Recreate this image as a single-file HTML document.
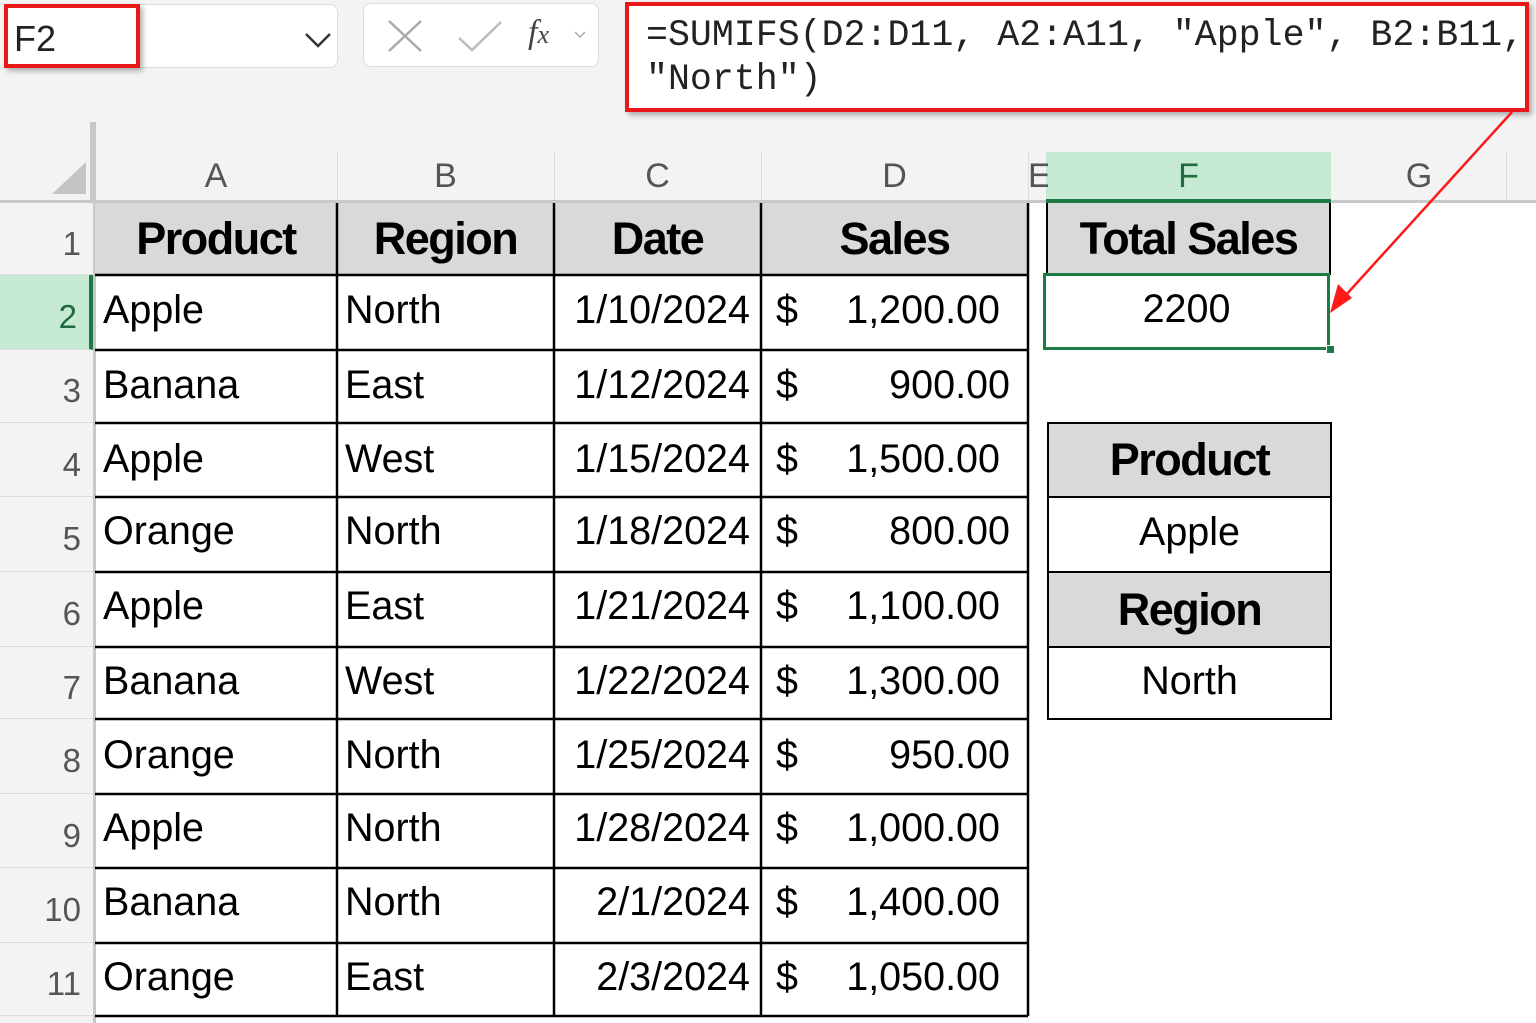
<!DOCTYPE html>
<html><head><meta charset="utf-8"><style>
*{margin:0;padding:0;box-sizing:border-box}
body{width:1536px;height:1023px;position:relative;overflow:hidden;background:#fff;font-family:"Liberation Sans",Arial,sans-serif;color:#000}
.a{position:absolute}
.c{position:absolute;display:flex;align-items:center;font-size:39.5px;white-space:nowrap}
.h{font-weight:bold;font-size:45px;letter-spacing:-1.5px;justify-content:center;background:#d9d9d9}
.cl{position:absolute;top:150px;height:53px;display:flex;align-items:center;justify-content:center;font-size:34px;color:#555}
.rn{position:absolute;left:0;width:93px;display:flex;align-items:center;justify-content:flex-end;padding-right:12px;padding-top:10px;font-size:33px;color:#555;border-bottom:1px solid #ddd}
</style></head><body>
<div class="a" style="left:0;top:0;width:1536px;height:203px;background:#f3f3f3"></div>
<div class="a" style="left:0;top:203px;width:95px;height:820px;background:#f3f3f3"></div>
<!-- name box -->
<div class="a" style="left:4px;top:4px;width:334px;height:64px;background:#fff;border:1px solid #ddd;border-radius:8px"></div>
<svg class="a" style="left:303px;top:30px" width="30" height="20"><path d="M3 4 L15 16 L27 4" fill="none" stroke="#333" stroke-width="2.5"/></svg>
<div class="a" style="left:4px;top:4px;width:136px;height:64px;border:4px solid #e81818;box-shadow:3px 3px 5px rgba(0,0,0,.3)"></div>
<div class="a" style="left:14px;top:18px;font-size:36px;color:#222">F2</div>
<!-- fx box -->
<div class="a" style="left:363px;top:3px;width:236px;height:64px;background:#fff;border:1px solid #ddd;border-radius:8px"></div>
<svg class="a" style="left:385px;top:18px" width="40" height="36"><path d="M4 3 L36 33 M36 3 L4 33" stroke="#aaa" stroke-width="2.5"/></svg>
<svg class="a" style="left:455px;top:18px" width="50" height="36"><path d="M4 20 L17 32 L46 4" fill="none" stroke="#bbb" stroke-width="2.5"/></svg>
<div class="a" style="left:528px;top:14px;font-size:34px;font-style:italic;font-family:'Liberation Serif',serif;color:#444">f<span style="font-size:26px">x</span></div>
<svg class="a" style="left:573px;top:30px" width="14" height="10"><path d="M2 2 L7 7 L12 2" fill="none" stroke="#aaa" stroke-width="1.5"/></svg>
<!-- formula -->
<div class="a" style="left:625px;top:2px;width:904px;height:110px;background:#fff;border:4px solid #e81818;box-shadow:3px 3px 5px rgba(0,0,0,.3)"></div>
<div class="a" style="left:646px;top:14px;font-family:'Liberation Mono',monospace;font-size:36.6px;line-height:44px;color:#222;white-space:pre">=SUMIFS(D2:D11, A2:A11, "Apple", B2:B11,
"North")</div>
<!-- corner -->
<div class="a" style="left:90px;top:122px;width:6px;height:81px;background:#c8c8c8"></div>
<svg class="a" style="left:50px;top:160px" width="38" height="36"><path d="M36 2 L36 34 L2 34 Z" fill="#c4c4c4"/></svg>
<div class="a" style="left:0;top:200px;width:1536px;height:3px;background:#c8c8c8"></div>
<!-- column headers -->
<div class="a" style="left:1046px;top:152px;width:285px;height:48px;background:#c6e9d3"></div>
<div class="a" style="left:1046px;top:199px;width:285px;height:4px;background:#1e7a45"></div>
<div class="cl" style="left:95px;width:242px">A</div>
<div class="cl" style="left:337px;width:217px">B</div>
<div class="cl" style="left:554px;width:207px">C</div>
<div class="cl" style="left:761px;width:267px">D</div>
<div class="cl" style="left:1028px;width:20px;overflow:hidden;justify-content:flex-start">E</div>
<div class="cl" style="left:1046px;width:285px;color:#1e6b3c">F</div>
<div class="cl" style="left:1331px;width:176px">G</div>
<div class="a" style="left:337px;top:152px;width:1px;height:48px;background:#ddd"></div>
<div class="a" style="left:554px;top:152px;width:1px;height:48px;background:#ddd"></div>
<div class="a" style="left:761px;top:152px;width:1px;height:48px;background:#ddd"></div>
<div class="a" style="left:1028px;top:152px;width:1px;height:48px;background:#ddd"></div>
<div class="a" style="left:1506px;top:152px;width:1px;height:48px;background:#ddd"></div>
<!-- row numbers -->
<div class="rn" style="top:203px;height:72px">1</div>
<div class="rn" style="top:275px;height:75px;background:#c6e9d3;color:#1e6b3c;border-right:4px solid #1e7a45">2</div>
<div class="rn" style="top:350px;height:73px">3</div>
<div class="rn" style="top:423px;height:74px">4</div>
<div class="rn" style="top:497px;height:75px">5</div>
<div class="rn" style="top:572px;height:75px">6</div>
<div class="rn" style="top:647px;height:72px">7</div>
<div class="rn" style="top:719px;height:75px">8</div>
<div class="rn" style="top:794px;height:74px">9</div>
<div class="rn" style="top:868px;height:75px">10</div>
<div class="rn" style="top:943px;height:73px">11</div>
<div class="a" style="left:93px;top:203px;width:3px;height:820px;background:#c8c8c8"></div>
<!-- main table -->
<svg class="a" style="left:0;top:0" width="1536" height="1023">
<rect x="95" y="203" width="933" height="72" fill="#d9d9d9"/>
<g stroke="#000" stroke-width="2.5">
<path d="M95 275H1028M95 350H1028M95 423H1028M95 497H1028M95 572H1028M95 647H1028M95 719H1028M95 794H1028M95 868H1028M95 943H1028M95 1016H1028"/>
<path d="M337 203V1016M554 203V1016M761 203V1016M1028 203V1016"/>
</g>
</svg>
<div class="c h" style="left:95px;top:203px;width:242px;height:72px;background:none">Product</div>
<div class="c h" style="left:337px;top:203px;width:217px;height:72px;background:none">Region</div>
<div class="c h" style="left:554px;top:203px;width:207px;height:72px;background:none">Date</div>
<div class="c h" style="left:761px;top:203px;width:267px;height:72px;background:none">Sales</div>

<div class="c" style="left:103px;top:275px;height:70px">Apple</div>
<div class="c" style="left:103px;top:350px;height:70px">Banana</div>
<div class="c" style="left:103px;top:423px;height:72px">Apple</div>
<div class="c" style="left:103px;top:497px;height:68px">Orange</div>
<div class="c" style="left:103px;top:572px;height:68px">Apple</div>
<div class="c" style="left:103px;top:647px;height:68px">Banana</div>
<div class="c" style="left:103px;top:719px;height:72px">Orange</div>
<div class="c" style="left:103px;top:794px;height:68px">Apple</div>
<div class="c" style="left:103px;top:868px;height:68px">Banana</div>
<div class="c" style="left:103px;top:943px;height:68px">Orange</div>

<div class="c" style="left:345px;top:275px;height:70px">North</div>
<div class="c" style="left:345px;top:350px;height:70px">East</div>
<div class="c" style="left:345px;top:423px;height:72px">West</div>
<div class="c" style="left:345px;top:497px;height:68px">North</div>
<div class="c" style="left:345px;top:572px;height:68px">East</div>
<div class="c" style="left:345px;top:647px;height:68px">West</div>
<div class="c" style="left:345px;top:719px;height:72px">North</div>
<div class="c" style="left:345px;top:794px;height:68px">North</div>
<div class="c" style="left:345px;top:868px;height:68px">North</div>
<div class="c" style="left:345px;top:943px;height:68px">East</div>

<div class="c" style="left:554px;width:196px;justify-content:flex-end;top:275px;height:70px">1/10/2024</div>
<div class="c" style="left:554px;width:196px;justify-content:flex-end;top:350px;height:70px">1/12/2024</div>
<div class="c" style="left:554px;width:196px;justify-content:flex-end;top:423px;height:72px">1/15/2024</div>
<div class="c" style="left:554px;width:196px;justify-content:flex-end;top:497px;height:68px">1/18/2024</div>
<div class="c" style="left:554px;width:196px;justify-content:flex-end;top:572px;height:68px">1/21/2024</div>
<div class="c" style="left:554px;width:196px;justify-content:flex-end;top:647px;height:68px">1/22/2024</div>
<div class="c" style="left:554px;width:196px;justify-content:flex-end;top:719px;height:72px">1/25/2024</div>
<div class="c" style="left:554px;width:196px;justify-content:flex-end;top:794px;height:68px">1/28/2024</div>
<div class="c" style="left:554px;width:196px;justify-content:flex-end;top:868px;height:68px">2/1/2024</div>
<div class="c" style="left:554px;width:196px;justify-content:flex-end;top:943px;height:68px">2/3/2024</div>

<div class="c" style="left:776px;top:275px;height:70px">$</div>
<div class="c" style="left:776px;top:350px;height:70px">$</div>
<div class="c" style="left:776px;top:423px;height:72px">$</div>
<div class="c" style="left:776px;top:497px;height:68px">$</div>
<div class="c" style="left:776px;top:572px;height:68px">$</div>
<div class="c" style="left:776px;top:647px;height:68px">$</div>
<div class="c" style="left:776px;top:719px;height:72px">$</div>
<div class="c" style="left:776px;top:794px;height:68px">$</div>
<div class="c" style="left:776px;top:868px;height:68px">$</div>
<div class="c" style="left:776px;top:943px;height:68px">$</div>

<div class="c" style="left:800px;width:200px;justify-content:flex-end;top:275px;height:70px">1,200.00</div>
<div class="c" style="left:800px;width:210px;justify-content:flex-end;top:350px;height:70px">900.00</div>
<div class="c" style="left:800px;width:200px;justify-content:flex-end;top:423px;height:72px">1,500.00</div>
<div class="c" style="left:800px;width:210px;justify-content:flex-end;top:497px;height:68px">800.00</div>
<div class="c" style="left:800px;width:200px;justify-content:flex-end;top:572px;height:68px">1,100.00</div>
<div class="c" style="left:800px;width:200px;justify-content:flex-end;top:647px;height:68px">1,300.00</div>
<div class="c" style="left:800px;width:210px;justify-content:flex-end;top:719px;height:72px">950.00</div>
<div class="c" style="left:800px;width:200px;justify-content:flex-end;top:794px;height:68px">1,000.00</div>
<div class="c" style="left:800px;width:200px;justify-content:flex-end;top:868px;height:68px">1,400.00</div>
<div class="c" style="left:800px;width:200px;justify-content:flex-end;top:943px;height:68px">1,050.00</div>

<!-- F column -->
<div class="c h" style="left:1046px;top:203px;width:285px;height:72px;border-left:2.5px solid #000;border-right:2.5px solid #000">Total Sales</div>
<div class="c" style="left:1043px;top:273px;width:287px;height:77px;border:3.5px solid #1e7a45;justify-content:center;padding-bottom:4px">2200</div>
<div class="a" style="left:1326px;top:345px;width:9px;height:9px;background:#1e7a45;border:1px solid #fff"></div>

<div class="a" style="left:1047px;top:422px;width:285px;height:298px;border:2.5px solid #000"></div>
<div class="c h" style="left:1049px;top:424px;width:281px;height:72px">Product</div>
<div class="a" style="left:1047px;top:496px;width:285px;height:2px;background:#000"></div>
<div class="c" style="left:1047px;top:497px;width:285px;height:70px;justify-content:center">Apple</div>
<div class="a" style="left:1047px;top:571px;width:285px;height:2px;background:#000"></div>
<div class="c h" style="left:1049px;top:573px;width:281px;height:73px">Region</div>
<div class="a" style="left:1047px;top:646px;width:285px;height:2px;background:#000"></div>
<div class="c" style="left:1047px;top:647px;width:285px;height:68px;justify-content:center">North</div>

<!-- arrow -->
<svg class="a" style="left:0;top:0" width="1536" height="1023">
<line x1="1512" y1="112" x2="1345" y2="296" stroke="#ff1a1a" stroke-width="2.5"/>
<path d="M1330 313 L1338 284 L1352 298 Z" fill="#ff1a1a"/>
</svg>
</body></html>
